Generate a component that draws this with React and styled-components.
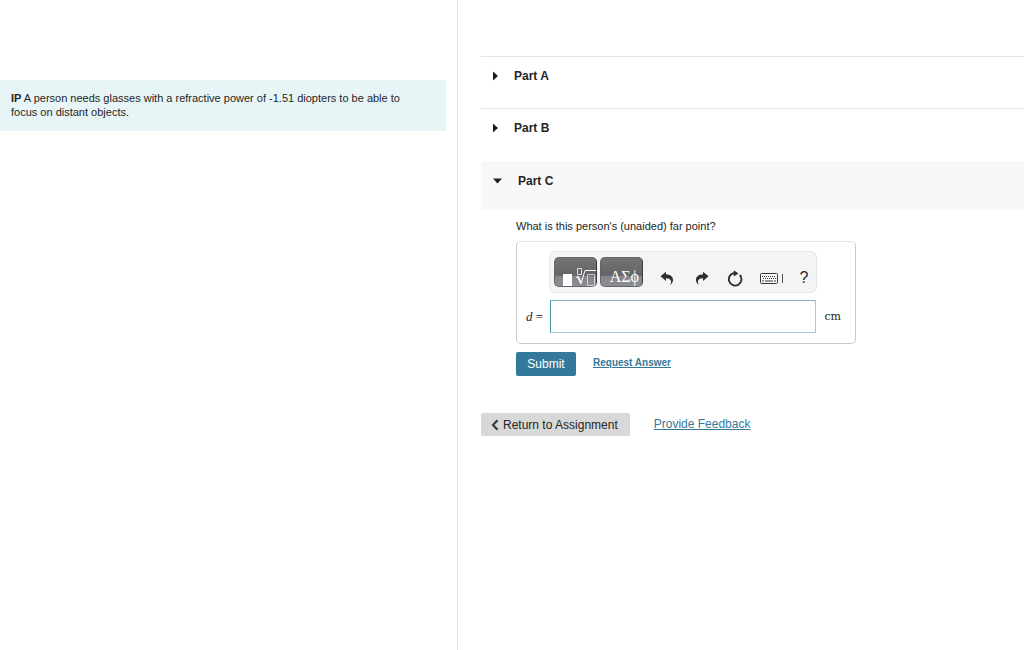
import React, { useState } from "react";
import { styled, createGlobalStyle } from "styled-components";

const colors = {
  text: "#252525",
  link: "#34799a",
  line: "#e4e4e4",
  callout: "#e8f5f6",
};

const GlobalStyle = createGlobalStyle`
  * {
    box-sizing: border-box;
  }
  body {
    margin: 0;
    background: #fff;
    color: ${colors.text};
    font-family: "Liberation Sans", Arial, sans-serif;
    font-size: 11px;
  }
  button, input {
    font: inherit;
    color: inherit;
  }
`;

const Page = styled.div`
  display: grid;
  grid-template-columns: minmax(0, 458fr) minmax(0, 566fr);
  min-height: 100vh;
`;

const ProblemPane = styled.aside`
  padding: 80px 11px 0 0;
  border-right: 1px solid ${colors.line};
`;

const Callout = styled.p`
  margin: 0;
  padding: 11px 32px 12px 11px;
  background: ${colors.callout};
  line-height: 14px;
`;

const PartsPane = styled.main`
  padding: 56px 0 0 23px;
`;

const PartHeader = styled.button`
  display: flex;
  align-items: flex-start;
  width: 100%;
  height: ${(p) => (p.$open ? 49 : 52)}px;
  margin-top: ${(p) => (p.$open ? 1 : 0)}px;
  padding: ${(p) => (p.$open ? "12px" : "11px")} 12px 0;
  border: 0;
  border-top: ${(p) => (p.$open ? "0" : `1px solid ${colors.line}`)};
  background: ${(p) => (p.$open ? "#f8f8f8" : "transparent")};
  font-size: 12px;
  font-weight: bold;
  line-height: 16px;
  text-align: left;
  cursor: pointer;
`;

const Caret = styled.svg`
  flex: none;
  width: ${(p) => (p.$open ? 9 : 5)}px;
  height: 16px;
  margin-right: 16px;
  fill: #1d1d1d;
`;

const PartBody = styled.section`
  padding: 9px 12px 0 35px;
`;

const Question = styled.p`
  margin: 0 0 8px;
  line-height: 14px;
`;

const AnswerBox = styled.div`
  width: 340px;
  max-width: 100%;
  padding: 9px 14px 10px 9px;
  border: 1px solid #c9c9c9;
  border-top-color: #e4e4e4;
  border-radius: 5px;
`;

const Toolbar = styled.div`
  display: flex;
  align-items: flex-start;
  width: 268px;
  height: 42px;
  margin: 0 0 7px 23px;
  padding: 5px 0 5px 4px;
  border: 1px solid #e6e6e6;
  border-radius: 6px;
  background: #f4f4f4;
`;

const PaletteButton = styled.button`
  flex: none;
  width: 43px;
  height: 30px;
  margin-right: 3px;
  padding: 0;
  border: 1px solid #66666a;
  border-right-color: #3c3c3e;
  border-radius: 5px;
  background: linear-gradient(#747475, #646465 62%, #85858c 64%, #8c8c94);
  color: #fff;
  overflow: hidden;
  cursor: pointer;

  svg {
    display: block;
  }
`;

const GreekLabel = styled.span`
  display: block;
  padding: 9px 3px 0 0;
  font-family: "Liberation Serif", "Times New Roman", serif;
  font-size: 16px;
  line-height: 18px;
  text-align: right;
`;

const ToolButton = styled.button`
  display: flex;
  flex: none;
  align-items: center;
  justify-content: center;
  width: ${(p) => p.$width || 34}px;
  height: 18px;
  margin-top: 12px;
  padding: 0;
  border: 0;
  background: transparent;
  font-size: 16px;
  cursor: pointer;
`;

const AnswerRow = styled.label`
  display: flex;
  align-items: center;
  font-family: "DejaVu Serif", serif;
  font-size: 11px;
`;

const Variable = styled.span`
  width: 24px;
  flex: none;
  white-space: nowrap;
  font-family: "Liberation Serif", "Times New Roman", serif;
  font-size: 13px;
`;

const AnswerInput = styled.input`
  flex: 1;
  min-width: 0;
  height: 33px;
  padding: 0 6px;
  border: 1px solid #a5cad7;
  border-top-color: #82b3c5;
  border-left-color: #4e91ad;
  border-radius: 0;
  background: #fff;
  outline: none;
`;

const Unit = styled.span`
  padding-left: 8px;
`;

const Actions = styled.div`
  display: flex;
  align-items: center;
  gap: ${(p) => p.$gap}px;
  margin-top: ${(p) => p.$top}px;
`;

const SubmitButton = styled.button`
  width: 60px;
  height: 24px;
  padding: 0;
  border: 0;
  border-radius: 2px;
  background: ${colors.link};
  color: #fff;
  font-size: 12px;
  cursor: pointer;
`;

const ReturnButton = styled.button`
  display: flex;
  align-items: center;
  gap: 4px;
  height: 23px;
  padding: 0 12px 0 10px;
  border: 0;
  border-radius: 2px;
  background: #d8d8d8;
  font-size: 12px;
  white-space: nowrap;
  cursor: pointer;
`;

const TextLink = styled.a`
  padding-bottom: 2px;
  color: ${colors.link};
  font-size: ${(p) => (p.$strong ? 10 : 12)}px;
  font-weight: ${(p) => (p.$strong ? "bold" : "normal")};
  line-height: 14px;
  text-decoration: underline;
`;

const PartTitle = ({ open, children }) => (
  <PartHeader type="button" $open={open} aria-expanded={!!open}>
    {open ? (
      <Caret $open viewBox="0 0 9 16" aria-hidden="true">
        <path d="M0 5.5h9L4.5 10.5z" />
      </Caret>
    ) : (
      <Caret viewBox="0 0 5 16" aria-hidden="true">
        <path d="M0 3.5v9L5 8z" />
      </Caret>
    )}
    {children}
  </PartHeader>
);

const TemplateIcon = () => (
  <svg width="41" height="28" viewBox="0 0 41 28" aria-hidden="true">
    <rect x="8" y="16" width="9" height="12" fill="#fff" />
    <g fill="none" stroke="#fff">
      <path d="M22.5 10.5h4v6h-4z" strokeOpacity="0.8" />
      <path d="M21 19.5l2-1" />
      <path d="M23 18.5l3 7" strokeWidth="1.8" />
      <path d="M26 25.5l4-13h11" />
      <path d="M32.5 16.5h7v11h-7z" strokeOpacity="0.65" />
    </g>
  </svg>
);

const UndoIcon = () => (
  <svg width="14" height="14" viewBox="0 0 14 14" aria-hidden="true">
    <path
      d="M0.5 5.2L6 0.7v2.8c4.5 0 7 2 7 5.4 0 2.2-1 3.8-3 4.9.9-1.2 1.3-2.3 1.1-3.5C10.7 8.3 9 7.2 6 7.2V10z"
      fill="#2e2e2e"
    />
  </svg>
);

const RedoIcon = () => (
  <svg width="14" height="14" viewBox="0 0 14 14" aria-hidden="true">
    <path
      d="M13.5 5.2L8 0.7v2.8c-4.5 0-7 2-7 5.4 0 2.2 1 3.8 3 4.9-.9-1.2-1.3-2.3-1.1-3.5C3.3 8.3 5 7.2 8 7.2V10z"
      fill="#2e2e2e"
    />
  </svg>
);

const ResetIcon = () => (
  <svg width="16" height="17" viewBox="0 0 16 17" aria-hidden="true">
    <path
      d="M12.8 5A6.3 6.3 0 1 1 7.5 3"
      fill="none"
      stroke="#2e2e2e"
      strokeWidth="1.9"
    />
    <path d="M6.8 0.2l4.7 3.2L6.8 6.6z" fill="#2e2e2e" />
  </svg>
);

const KeyboardIcon = () => (
  <svg width="24" height="12" viewBox="0 0 24 12" aria-hidden="true">
    <rect x="0.5" y="1.5" width="17" height="10" rx="1" fill="#f8f8f8" stroke="#3a3a3a" />
    <g stroke="#3a3a3a" strokeDasharray="1 1">
      <path d="M2 4.5h14" />
      <path d="M3 6.5h13" />
    </g>
    <path d="M2 9h2M5 9h8M14 9h2" stroke="#3a3a3a" />
    <path d="M22.5 2v9" stroke="#555" />
  </svg>
);

const ChevronLeft = () => (
  <svg width="8" height="12" viewBox="0 0 8 12" aria-hidden="true">
    <path d="M6.5 1.2L2 6l4.5 4.8" fill="none" stroke="#3c3c3c" strokeWidth="2.2" />
  </svg>
);

const App = () => {
  const [answer, setAnswer] = useState("");

  return (
    <>
      <GlobalStyle />
      <Page>
        <ProblemPane>
          <Callout>
            <b>IP</b> A person needs glasses with a refractive power of -1.51
            diopters to be able to focus on distant objects.
          </Callout>
        </ProblemPane>
        <PartsPane>
          <PartTitle>Part A</PartTitle>
          <PartTitle>Part B</PartTitle>
          <PartTitle open>Part C</PartTitle>
          <PartBody>
            <Question>What is this person's (unaided) far point?</Question>
            <AnswerBox>
              <Toolbar role="toolbar" aria-label="Equation tools">
                <PaletteButton type="button" aria-label="Templates">
                  <TemplateIcon />
                </PaletteButton>
                <PaletteButton type="button">
                  <GreekLabel>ΑΣϕ</GreekLabel>
                </PaletteButton>
                <ToolButton type="button" $width={42} aria-label="Undo">
                  <UndoIcon />
                </ToolButton>
                <ToolButton type="button" $width={28} aria-label="Redo">
                  <RedoIcon />
                </ToolButton>
                <ToolButton type="button" $width={38} aria-label="Reset">
                  <ResetIcon />
                </ToolButton>
                <ToolButton type="button" $width={36} aria-label="Keyboard shortcuts">
                  <KeyboardIcon />
                </ToolButton>
                <ToolButton type="button" $width={28} aria-label="Help">
                  ?
                </ToolButton>
              </Toolbar>
              <AnswerRow>
                <Variable>
                  <i>d</i> =
                </Variable>
                <AnswerInput
                  type="text"
                  value={answer}
                  onChange={(e) => setAnswer(e.target.value)}
                />
                <Unit>cm</Unit>
              </AnswerRow>
            </AnswerBox>
            <Actions $gap={17} $top={8}>
              <SubmitButton type="button">Submit</SubmitButton>
              <TextLink href="#answer" $strong>
                Request Answer
              </TextLink>
            </Actions>
          </PartBody>
          <Actions $gap={24} $top={37}>
            <ReturnButton type="button">
              <ChevronLeft />
              Return to Assignment
            </ReturnButton>
            <TextLink href="#feedback">Provide Feedback</TextLink>
          </Actions>
        </PartsPane>
      </Page>
    </>
  );
};

export default App;
